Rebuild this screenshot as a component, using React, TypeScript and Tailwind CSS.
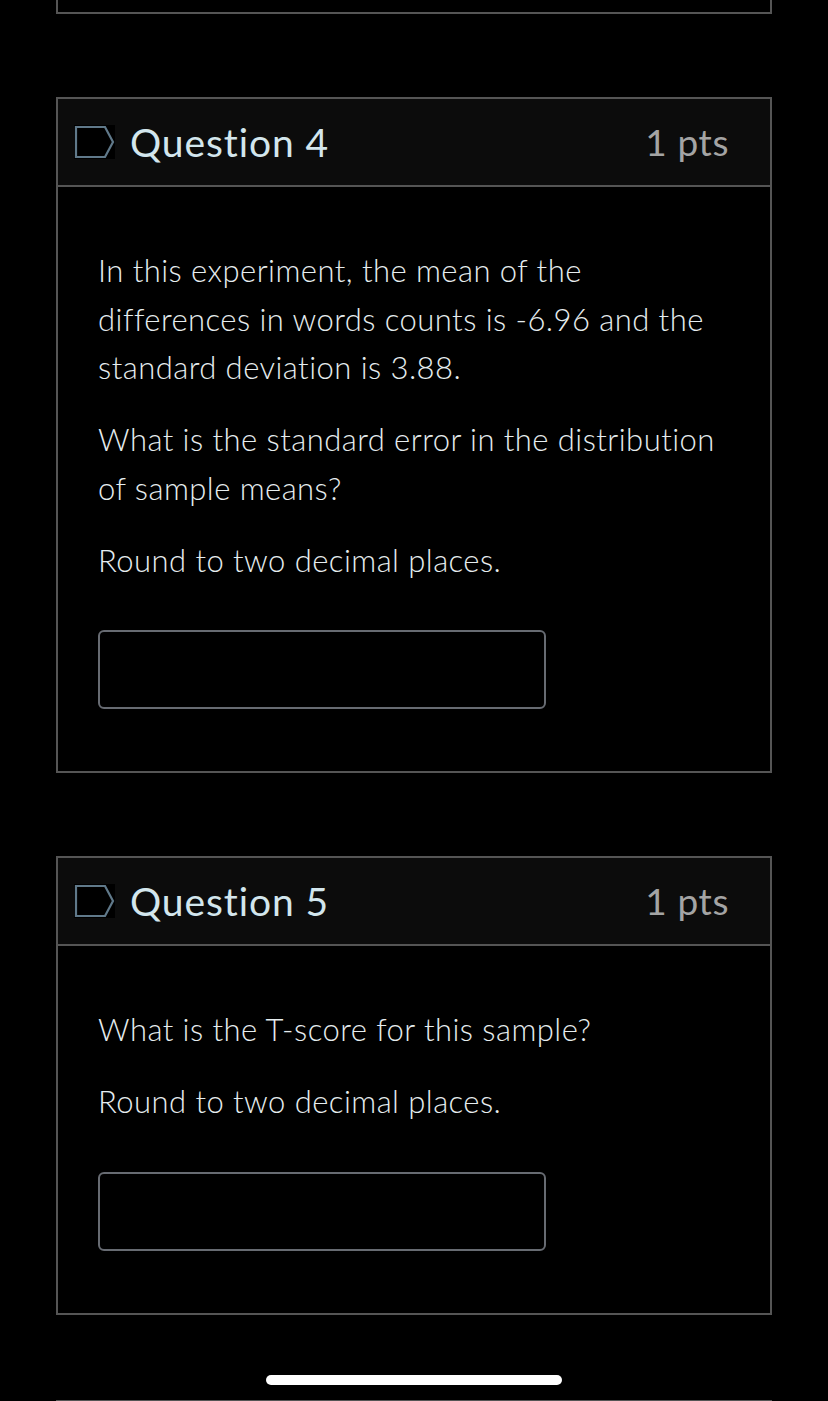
import React from 'react';

interface QuestionProps {
  number: number;
  points: number;
  paragraphs: string[];
}

function FlagIcon() {
  return (
    <svg width="41" height="34" viewBox="0 0 41 34" className="shrink-0">
      <rect x="0" y="0" width="41" height="34" fill="#000" />
      <path d="M2 2 H31 L39 17 L31 32 H2 Z" fill="none" stroke="#60798a" strokeWidth="2.2" strokeLinejoin="miter" />
    </svg>
  );
}

function QuestionCard({ number, points, paragraphs }: QuestionProps) {
  return (
    <div className="mx-[56px] border-2 border-[#555555] bg-black">
      <div className="h-[88px] bg-[#0c0c0c] border-b-2 border-[#555555] flex items-center pl-[16px] pr-[41px]">
        <FlagIcon />
        <span className="ml-[15px] text-[39px] text-[#d3e6ed] tracking-[0.9px]">Question {number}</span>
        <span className="ml-auto text-[37px] text-[#a4a4a4] tracking-[0.6px]">{points} pts</span>
      </div>
      <div className="pt-[59px] pb-[62px] px-[40px]">
        <div className="flex flex-col gap-[23.5px]">
          {paragraphs.map((p, i) => (
            <p key={i} className="text-[31px] font-light leading-[48.5px] tracking-[0.45px] text-[#e6edef]">{p}</p>
          ))}
        </div>
        <div className="mt-[46px] w-[448px] h-[79px] rounded-[6px] border-2 border-[#676b72]" />
      </div>
    </div>
  );
}

export default function App() {
  return (
    <div className="w-[828px] h-[1401px] bg-black overflow-hidden relative" style={{ fontFamily: 'Lato, "Open Sans", sans-serif' }}>
      <div className="mx-[56px] h-[14px] border-2 border-t-0 border-[#555555]" />
      <div className="h-[83px]" />
      <QuestionCard
        number={4}
        points={1}
        paragraphs={[
          'In this experiment, the mean of the differences in words counts is -6.96 and the standard deviation is 3.88.',
          'What is the standard error in the distribution of sample means?',
          'Round to two decimal places.',
        ]}
      />
      <div className="h-[83px]" />
      <QuestionCard
        number={5}
        points={1}
        paragraphs={['What is the T-score for this sample?', 'Round to two decimal places.']}
      />
      <div className="h-[85px]" />
      <div className="mx-[56px] h-[40px] border-t-2 border-[#555555]" />
      <div className="absolute left-[266px] top-[1375px] w-[296px] h-[10px] rounded-full bg-white" />
    </div>
  );
}
